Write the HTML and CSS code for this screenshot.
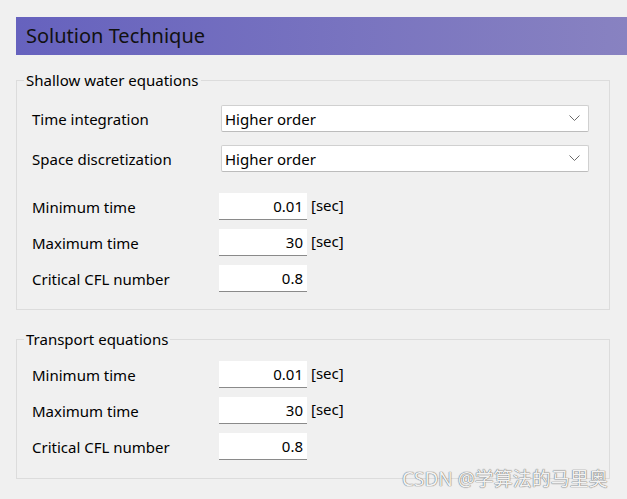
FILE: index.html
```html
<!DOCTYPE html>
<html>
<head>
<meta charset="utf-8">
<link rel="stylesheet" href="styles.css">
</head>
<body>
<div class="page">
  <div class="header">Solution Technique</div>
  <fieldset class="group g1">
    <legend>Shallow water equations</legend>
    <div class="row sel-row first">
      <span class="label">Time integration</span>
      <div class="select"><span>Higher order</span><svg class="chev" width="11" height="7" viewBox="0 0 11 7"><polyline points="0.5,0.5 5.5,5.5 10.5,0.5" fill="none" stroke="#6a6a6a" stroke-width="1"/></svg></div>
    </div>
    <div class="row sel-row second">
      <span class="label">Space discretization</span>
      <div class="select"><span>Higher order</span><svg class="chev" width="11" height="7" viewBox="0 0 11 7"><polyline points="0.5,0.5 5.5,5.5 10.5,0.5" fill="none" stroke="#6a6a6a" stroke-width="1"/></svg></div>
    </div>
    <div class="inputs gap1">
      <div class="row in-row"><span class="label2">Minimum time</span><div class="input">0.01</div><span class="unit">[sec]</span></div>
      <div class="row in-row"><span class="label2">Maximum time</span><div class="input">30</div><span class="unit">[sec]</span></div>
      <div class="row in-row"><span class="label2">Critical CFL number</span><div class="input">0.8</div></div>
    </div>
  </fieldset>
  <fieldset class="group g2">
    <legend>Transport equations</legend>
    <div class="inputs gap2">
      <div class="row in-row"><span class="label2">Minimum time</span><div class="input">0.01</div><span class="unit">[sec]</span></div>
      <div class="row in-row"><span class="label2">Maximum time</span><div class="input">30</div><span class="unit">[sec]</span></div>
      <div class="row in-row"><span class="label2">Critical CFL number</span><div class="input">0.8</div></div>
    </div>
  </fieldset>
  <div class="watermark">CSDN @学算法的马里奥</div>
</div>
</body>
</html>
```
FILE: styles.css
```css
html, body {
  margin: 0;
  padding: 0;
  background: #f0f0f0;
}
body {
  width: 627px;
  height: 499px;
  overflow: hidden;
  font-family: "Noto Sans", "Open Sans", sans-serif;
  color: #000;
}
.page {
  position: relative;
  width: 627px;
  height: 499px;
  padding-top: 17px;
  box-sizing: border-box;
}
.header {
  margin-left: 16px;
  height: 38px;
  line-height: 37px;
  padding-left: 10px;
  font-size: 20px;
  background: linear-gradient(to right, #6662be, #8882c1);
  color: #111;
}
.group {
  margin: 0 0 0 16px;
  width: 594px;
  box-sizing: border-box;
  border: 1px solid #dcdcdc;
  padding: 0 0 0 15px;
}
.g1 {
  margin-top: 15px;
  height: 240px;
}
.g2 {
  margin-top: 19px;
  height: 150px;
}
.group legend {
  font-size: 15px;
  line-height: 20px;
  padding: 0 2px;
  margin-left: -8px;
}
.row {
  display: flex;
  align-items: center;
}
.label {
  width: 189px;
  font-size: 15px;
}
.label2 {
  width: 187px;
  font-size: 15px;
}
.sel-row.first { margin-top: 15px; }
.sel-row.second { margin-top: 13px; }
.select {
  width: 368px;
  height: 27px;
  box-sizing: border-box;
  background: #fff;
  border: 1px solid #d0d0d0;
  border-bottom-color: #bcbcbc;
  border-radius: 2px;
  display: flex;
  align-items: center;
  justify-content: space-between;
  padding: 0 8px 0 3px;
  font-size: 15px;
}
.chev { display: block; }
.inputs {
  display: flex;
  flex-direction: column;
  gap: 9px;
}
.gap1 { margin-top: 21px; }
.gap2 { margin-top: 12px; }
.input {
  width: 88px;
  height: 27px;
  box-sizing: border-box;
  background: #fff;
  border-bottom: 1px solid #8a8a8a;
  text-align: right;
  padding-right: 4px;
  font-size: 15px;
  line-height: 26px;
}
.unit {
  margin-left: 4px;
  font-size: 15px;
  margin-top: -3px;
}
.watermark {
  position: absolute;
  left: 402px;
  top: 466px;
  font-size: 19px;
  line-height: 26px;
  color: #f2f2f2;
  text-shadow: 0 0 1px #666, 0 0 1px #666;
  font-family: "Noto Sans", "Noto Sans CJK SC", sans-serif;
}
```
